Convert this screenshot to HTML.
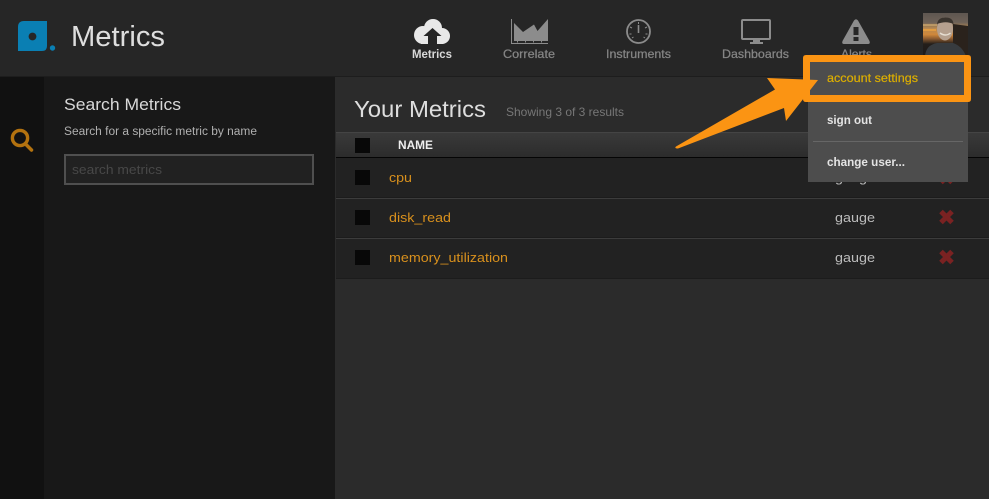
<!DOCTYPE html>
<html><head><meta charset="utf-8"><style>
html,body{margin:0;padding:0;background:#2a2a2a;width:989px;height:499px;overflow:hidden}
svg{display:block}
text{font-family:"Liberation Sans",sans-serif}
</style></head><body>
<svg width="989" height="499" viewBox="0 0 989 499" xmlns="http://www.w3.org/2000/svg">
<defs>
<linearGradient id="hd" x1="0" y1="0" x2="0" y2="1"><stop offset="0" stop-color="#3a3a3a"/><stop offset="1" stop-color="#2c2c2c"/></linearGradient>
<linearGradient id="sky" x1="0" y1="0" x2="0" y2="1"><stop offset="0" stop-color="#5e5650"/><stop offset=".22" stop-color="#6e6258"/><stop offset=".36" stop-color="#b98a50"/><stop offset=".5" stop-color="#d0883a"/><stop offset=".6" stop-color="#8a5a30"/><stop offset=".72" stop-color="#241e1a"/><stop offset="1" stop-color="#1c1a1a"/></linearGradient>
</defs>
<!-- backgrounds -->
<rect width="989" height="499" fill="#2a2a2a"/>
<rect x="0" y="0" width="989" height="76" fill="#262626"/>
<rect x="0" y="76" width="989" height="1" fill="#1d1d1d"/>
<rect x="0" y="77" width="44" height="422" fill="#111111"/>
<rect x="44" y="77" width="291" height="422" fill="#181818"/>
<rect x="335" y="77" width="654" height="422" fill="#2b2b2b"/>
<!-- logo -->
<path d="M24 21H47V46Q47 51 42 51H18V27Q18 21 24 21Z" fill="#0a7fb3"/>
<circle cx="32.500" cy="36.500" r="3.900" fill="#262626"/>
<circle cx="52.500" cy="48" r="2.700" fill="#0a7fb3"/>
<text x="71" y="46" font-size="29" fill="#dedede" textLength="94" lengthAdjust="spacingAndGlyphs">Metrics</text>
<!-- nav: metrics -->
<g fill="#e8e8e8">
<circle cx="423" cy="35" r="9"/>
<circle cx="433" cy="28" r="9"/>
<circle cx="442" cy="36" r="8"/>
<rect x="421" y="30" width="22" height="14"/>
</g>
<path d="M432.500 28L441.500 36H437V44H428V36H423.500Z" fill="#262626"/>
<text x="412" y="58" font-size="12" font-weight="bold" fill="#d8d8d8" textLength="40" lengthAdjust="spacingAndGlyphs">Metrics</text>
<!-- nav: correlate -->
<path d="M511.500 19V43.500H548" fill="none" stroke="#8c8c8c" stroke-width="1"/>
<path d="M514 23L523 32L534 24.500L537.500 31L548 19V41H514Z" fill="#8c8c8c"/>
<path d="M517.500 41v1.500M525.500 41v1.500M533.500 41v1.500M541.500 41v1.500" stroke="#8c8c8c"/>
<text x="503" y="58" font-size="12" fill="#858585" stroke="#858585" stroke-width=".25" textLength="52" lengthAdjust="spacingAndGlyphs">Correlate</text>
<!-- nav: instruments -->
<circle cx="638.500" cy="31.500" r="11.500" fill="none" stroke="#8c8c8c" stroke-width="1.800"/>
<path d="M638.500 25V33" stroke="#8c8c8c" stroke-width="1.600"/>
<path d="M638.500 22v2M630 27l2 1M647 27l-2 1M629.500 34h2M647.500 34h-2M632 38l1.500-1M645 38l-1.500-1" stroke="#8c8c8c" stroke-width="1"/>
<text x="606" y="58" font-size="12" fill="#858585" stroke="#858585" stroke-width=".25" textLength="65" lengthAdjust="spacingAndGlyphs">Instruments</text>
<!-- nav: dashboards -->
<rect x="742" y="20" width="28" height="19" rx="1" fill="none" stroke="#8c8c8c" stroke-width="2"/>
<path d="M753 40H760V42H763V44H750V42H753Z" fill="#8c8c8c"/>
<text x="722" y="58" font-size="12" fill="#858585" stroke="#858585" stroke-width=".25" textLength="67" lengthAdjust="spacingAndGlyphs">Dashboards</text>
<!-- nav: alerts -->
<path d="M854 20.500Q856 18 858 20.500L869.500 41Q870.500 44 868 44H844Q841.500 44 842.500 41Z" fill="#8c8c8c"/>
<rect x="853.500" y="27" width="5" height="8" fill="#262626"/>
<rect x="853.500" y="37" width="5" height="4" fill="#262626"/>
<text x="841" y="58" font-size="12" fill="#858585" stroke="#858585" stroke-width=".25" textLength="31" lengthAdjust="spacingAndGlyphs">Alerts</text>
<!-- avatar -->
<rect x="923" y="13" width="45" height="43" fill="url(#sky)"/>
<rect x="923" y="24" width="14" height="2" fill="#d8b070" opacity=".6"/>
<rect x="923" y="29" width="13" height="2" fill="#e8a040" opacity=".8"/>
<path d="M953 24L968 26V56H953Z" fill="#2a221c"/>
<path d="M925 56Q926 45 937 43L953 43Q962 46 966 56Z" fill="#373b3f"/>
<ellipse cx="945" cy="29" rx="8" ry="11.500" fill="#b5a08e"/>
<path d="M937 24Q938 17.500 945.500 17.500Q953 17.500 953.500 24Q946 20.500 937 24Z" fill="#3a342e"/>
<path d="M940 33Q945.500 37 950.500 33" stroke="#e6ded2" stroke-width="1.400" fill="none"/>
<!-- sidebar -->
<circle cx="20" cy="138" r="7.600" fill="none" stroke="#b3720f" stroke-width="3.400"/>
<path d="M26 144.500L31.500 150" stroke="#b3720f" stroke-width="3.500" stroke-linecap="round"/>
<text x="64" y="110" font-size="17" fill="#d8d8d8" textLength="117" lengthAdjust="spacingAndGlyphs">Search Metrics</text>
<text x="64" y="135" font-size="11.500" fill="#b0b0b0" textLength="193" lengthAdjust="spacingAndGlyphs">Search for a specific metric by name</text>
<rect x="65" y="155" width="248" height="29" fill="#212121" stroke="#4f4f4f" stroke-width="2"/>
<text x="72" y="174" font-size="13" fill="#484848" textLength="90" lengthAdjust="spacingAndGlyphs">search metrics</text>
<!-- main title -->
<text x="354" y="117" font-size="23" fill="#dedede" textLength="132" lengthAdjust="spacingAndGlyphs">Your Metrics</text>
<text x="506" y="116" font-size="12" fill="#777" textLength="118" lengthAdjust="spacingAndGlyphs">Showing 3 of 3 results</text>
<!-- table -->
<rect x="336" y="132" width="653" height="25" fill="url(#hd)"/>
<rect x="336" y="132" width="653" height="1" fill="#444"/>
<rect x="336" y="157" width="653" height="1" fill="#050505"/>
<rect x="336" y="158" width="653" height="120" fill="#222222"/>
<rect x="336" y="197" width="653" height="1" fill="#1c1c1c"/>
<rect x="336" y="198" width="653" height="1" fill="#3c3c3c"/>
<rect x="336" y="237" width="653" height="1" fill="#1c1c1c"/>
<rect x="336" y="238" width="653" height="1" fill="#3c3c3c"/>
<rect x="336" y="278" width="653" height="1" fill="#1c1c1c"/>
<rect x="355" y="138" width="15" height="15" fill="#080808"/>
<rect x="355" y="170" width="15" height="15" fill="#080808"/>
<rect x="355" y="210" width="15" height="15" fill="#080808"/>
<rect x="355" y="250" width="15" height="15" fill="#080808"/>
<text x="398" y="149" font-size="12" font-weight="bold" fill="#eeeeee" textLength="35" lengthAdjust="spacingAndGlyphs">NAME</text>
<text x="389" y="182" font-size="13" fill="#d8901d" textLength="23" lengthAdjust="spacingAndGlyphs">cpu</text>
<text x="389" y="222" font-size="13" fill="#d8901d" textLength="62" lengthAdjust="spacingAndGlyphs">disk_read</text>
<text x="389" y="262" font-size="13" fill="#d8901d" textLength="119" lengthAdjust="spacingAndGlyphs">memory_utilization</text>
<text x="835" y="182" font-size="13" fill="#bdbdbd" textLength="40" lengthAdjust="spacingAndGlyphs">gauge</text>
<text x="835" y="222" font-size="13" fill="#bdbdbd" textLength="40" lengthAdjust="spacingAndGlyphs">gauge</text>
<text x="835" y="262" font-size="13" fill="#bdbdbd" textLength="40" lengthAdjust="spacingAndGlyphs">gauge</text>
<path d="M941 171.500L952 182.500M952 171.500L941 182.500" stroke="#7a2222" stroke-width="5"/>
<path d="M941 211.500L952 222.500M952 211.500L941 222.500" stroke="#7a2222" stroke-width="5"/>
<path d="M941 251.500L952 262.500M952 251.500L941 262.500" stroke="#7a2222" stroke-width="5"/>
<!-- dropdown -->
<rect x="808" y="60" width="160" height="122" fill="#4d4d4d"/>
<rect x="813" y="141" width="150" height="1" fill="#666"/>
<text x="827" y="124" font-size="12" font-weight="bold" fill="#e4e4e4" textLength="45" lengthAdjust="spacingAndGlyphs">sign out</text>
<text x="827" y="166" font-size="12" font-weight="bold" fill="#e4e4e4" textLength="78" lengthAdjust="spacingAndGlyphs">change user...</text>
<text x="827" y="82" font-size="12" fill="#dcae00" stroke="#dcae00" stroke-width=".2" textLength="91" lengthAdjust="spacingAndGlyphs">account settings</text>
<!-- orange highlight & arrow -->
<path fill-rule="evenodd" d="M806 55H968Q971 55 971 58V99Q971 102 968 102H806Q803 102 803 99V58Q803 55 806 55ZM810 62V95H964V62Z" fill="#fb9413"/>
<path d="M676 146.500L775 89.500L767 78L818 80L786 121L784 108L678 148.500Q674 148.500 676 146.500Z" fill="#fb9413"/>
</svg>
</body></html>
